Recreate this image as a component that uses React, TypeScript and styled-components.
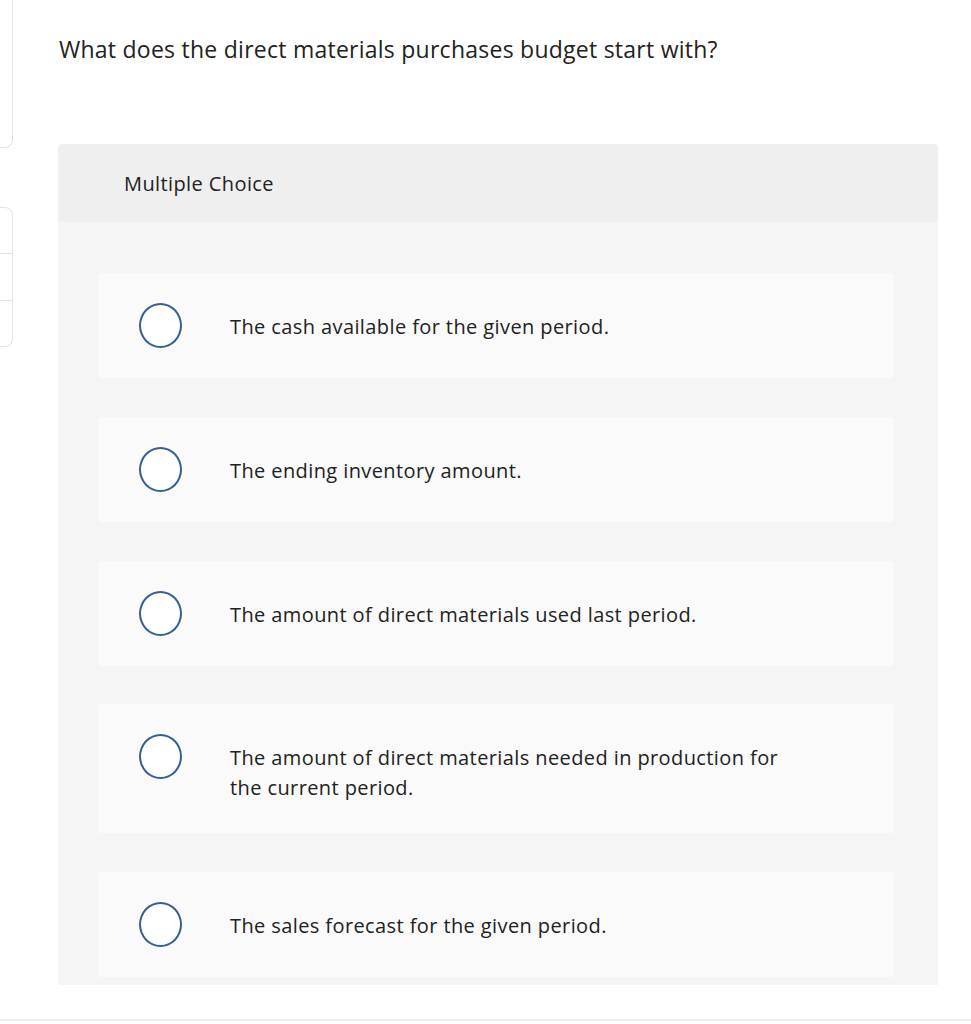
import React from "react";
import styled, { createGlobalStyle } from "styled-components";

const Global = createGlobalStyle`
  html, body { margin: 0; padding: 0; background: #ffffff; }
  body { font-family: "Open Sans", Lato, Arial, sans-serif; color: #222; }
`;

const Page = styled.div`
  width: 971px;
  height: 1024px;
  display: flex;
  flex-direction: column;
  overflow: hidden;
`;

const Layout = styled.div`
  display: flex;
  gap: 44px;
  height: 1021px;
`;

const Sidebar = styled.div`
  width: 14px;
  flex: none;
  display: flex;
  flex-direction: column;
  gap: 59px;
  margin-top: -20px;
`;

const SideCard = styled.div<{ h: number }>`
  width: 30px;
  margin-left: -17px;
  height: ${(p) => p.h}px;
  border: 1px solid #e2e2e2;
  border-radius: 8px;
  box-sizing: border-box;
  display: flex;
  flex-direction: column;
`;

const SideRow = styled.div`
  flex: 1;
  border-top: 1px solid #e2e2e2;
  &:first-child { border-top: none; }
`;

const Main = styled.div`
  width: 880px;
  display: flex;
  flex-direction: column;
`;

const Question = styled.h1`
  margin: 34px 0 0 1px;
  font-size: 23px;
  font-weight: 400;
  letter-spacing: 0.25px;
  line-height: 30px;
  color: #222;
`;

const Panel = styled.div`
  margin-top: 80px;
  background: #f5f5f5;
  border-radius: 4px 4px 0 0;
  display: flex;
  flex-direction: column;
  height: 841px;
  overflow: hidden;
`;

const PanelHeader = styled.div`
  height: 78px;
  background: #efefef;
  display: flex;
  align-items: center;
  padding-left: 66px;
  font-size: 20px;
  letter-spacing: 0.4px;
  color: #222;
`;

const Options = styled.div`
  display: flex;
  flex-direction: column;
  gap: 38.75px;
  padding: 51px 44px 0 40px;
`;

const Option = styled.div`
  background: #fafafa;
  border-radius: 4px;
  display: flex;
  align-items: flex-start;
  padding: 30px 20px 30px 41px;
`;

const Radio = styled.span`
  flex: none;
  width: 43px;
  height: 45px;
  box-sizing: border-box;
  border: 2px solid #335f95;
  border-radius: 50%;
  background: #fff;
`;

const Label = styled.div`
  margin: 9px 0 0 48px;
  font-size: 20px;
  letter-spacing: 0.4px;
  line-height: 30px;
  color: #222;
  max-width: 560px;
`;

const Footer = styled.div`
  height: 3px;
  border-top: 2px solid #efefef;
`;

const choices = [
  "The cash available for the given period.",
  "The ending inventory amount.",
  "The amount of direct materials used last period.",
  "The amount of direct materials needed in production for the current period.",
  "The sales forecast for the given period.",
];

export default function App() {
  return (
    <Page>
      <Global />
      <Layout>
        <Sidebar>
          <SideCard h={168} />
          <SideCard h={140}>
            <SideRow />
            <SideRow />
            <SideRow />
          </SideCard>
        </Sidebar>
        <Main>
          <Question>What does the direct materials purchases budget start with?</Question>
          <Panel>
            <PanelHeader>Multiple Choice</PanelHeader>
            <Options>
              {choices.map((c) => (
                <Option key={c}>
                  <Radio />
                  <Label>{c}</Label>
                </Option>
              ))}
            </Options>
          </Panel>
        </Main>
      </Layout>
      <Footer />
    </Page>
  );
}
